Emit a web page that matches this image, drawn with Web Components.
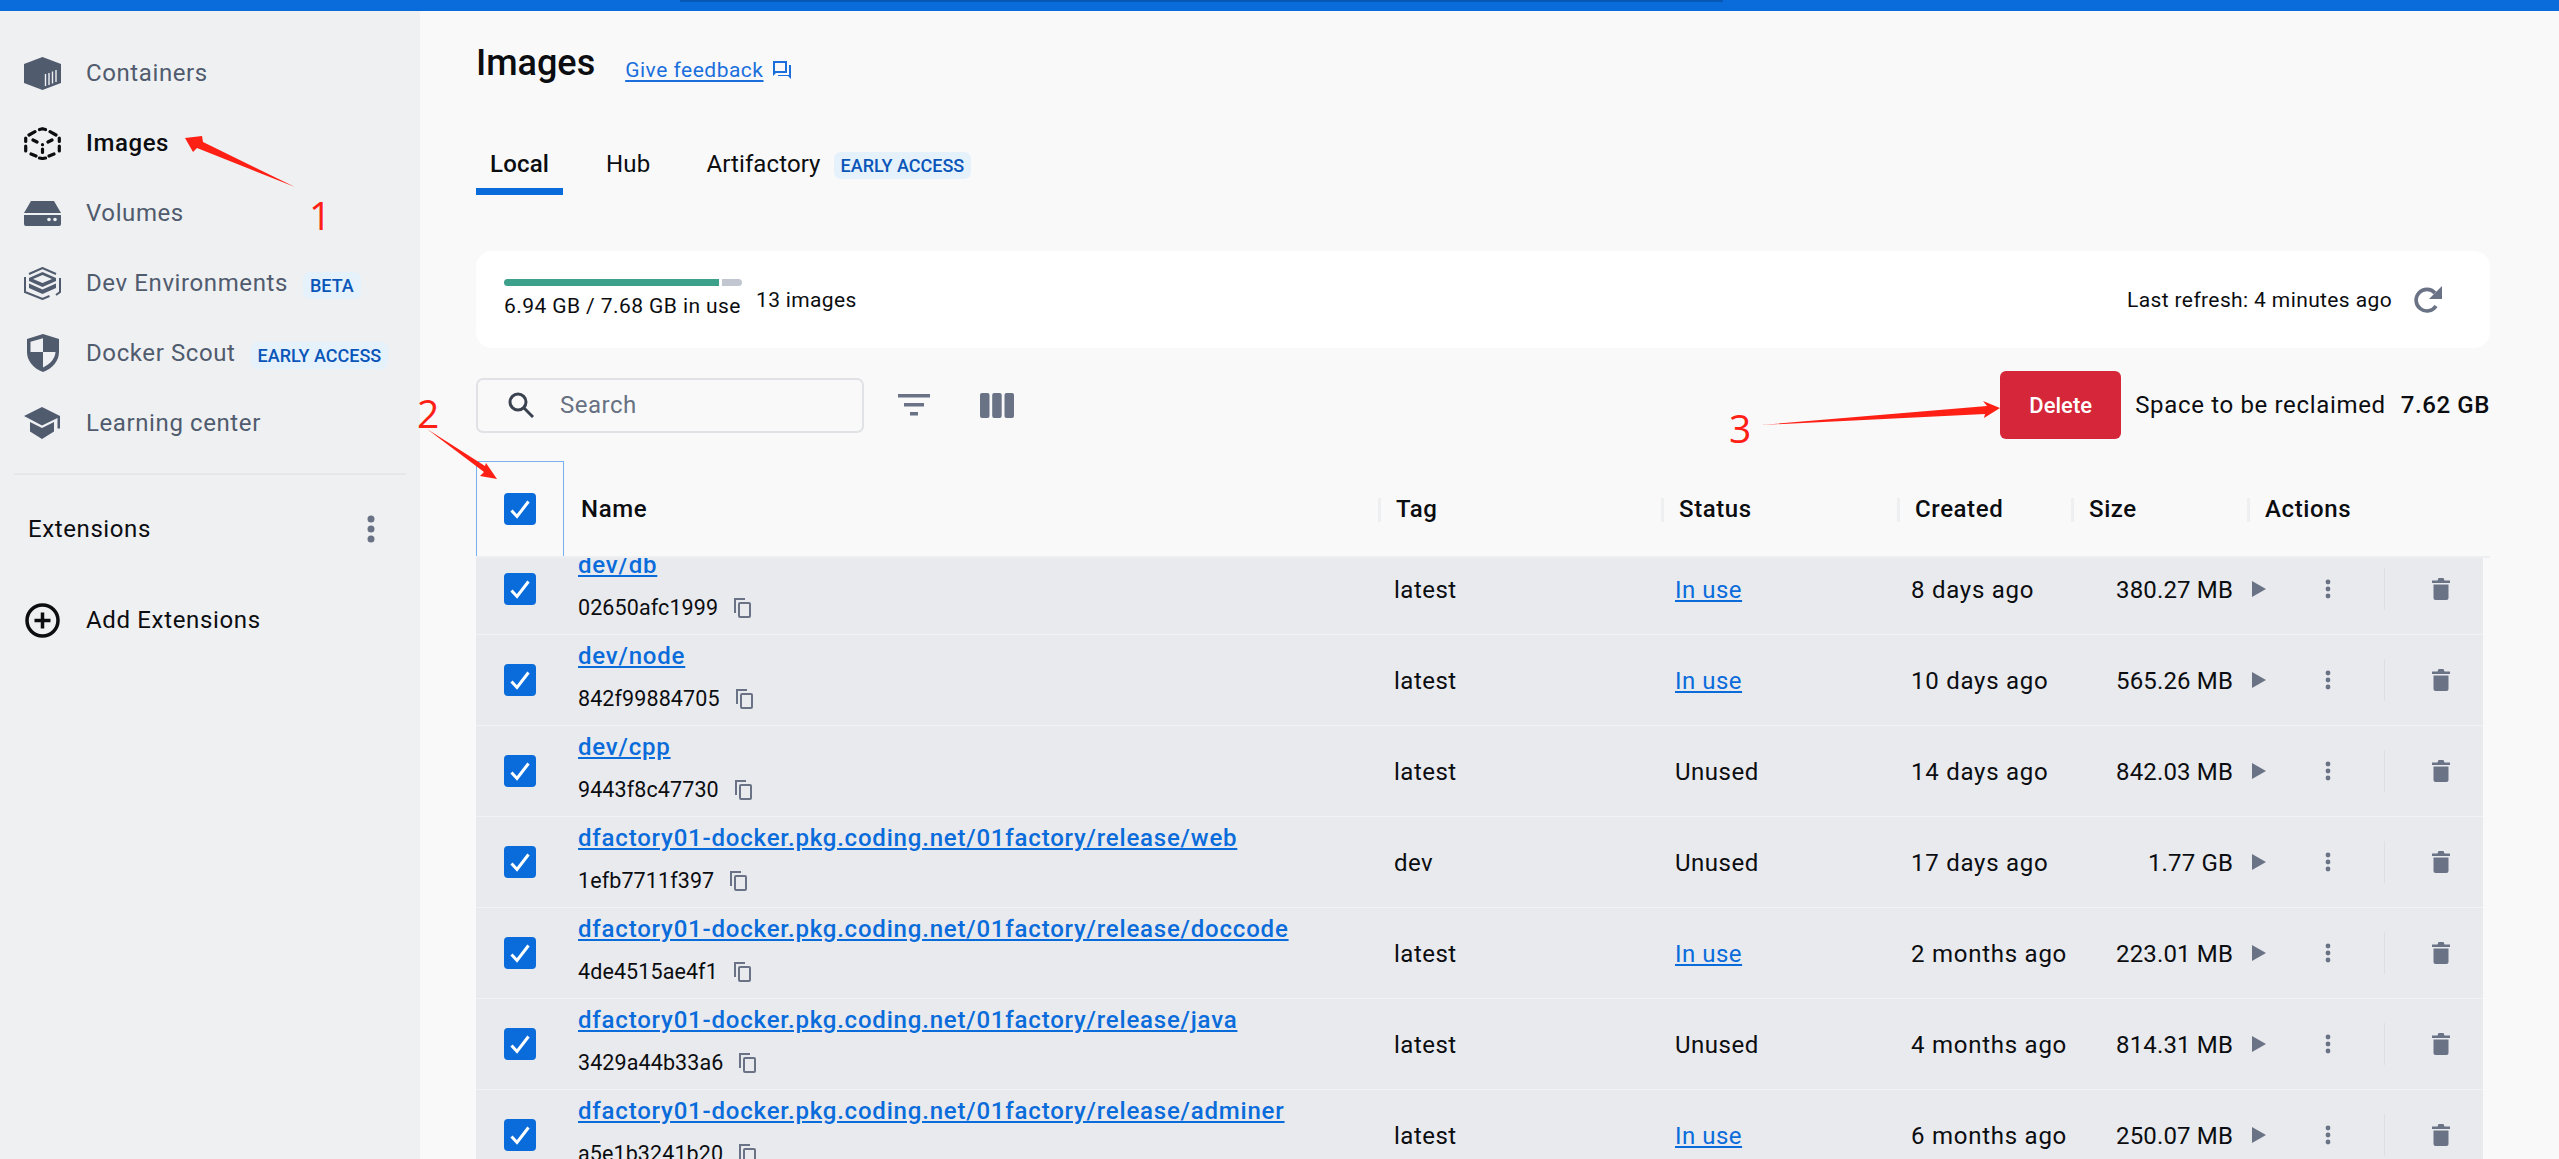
<!DOCTYPE html>
<html lang="en"><head><meta charset="utf-8"><title>Images</title>
<style>
html,body{margin:0;padding:0;height:100%;overflow:hidden;background:#f9f9fa;font-family:Roboto,"Liberation Sans",sans-serif;color:#0b0d10}
</style></head><body>
<app-shell>
  <side-nav slot="nav">
    <nav-item label="Containers" icon="containers"></nav-item>
    <nav-item label="Images" icon="images" active></nav-item>
    <nav-item label="Volumes" icon="volumes"></nav-item>
    <nav-item label="Dev Environments" icon="dev" badge="BETA"></nav-item>
    <nav-item label="Docker Scout" icon="scout" badge="EARLY ACCESS"></nav-item>
    <nav-item label="Learning center" icon="learn"></nav-item>
  </side-nav>
  <images-page>
    <page-title></page-title>
    <tab-bar></tab-bar>
    <usage-card></usage-card>
    <table-toolbar></table-toolbar>
    <image-table>
      <image-row name="dev/db" hash="02650afc1999" tag="latest" status="In use" created="8 days ago" size="380.27 MB"></image-row>
      <image-row name="dev/node" hash="842f99884705" tag="latest" status="In use" created="10 days ago" size="565.26 MB"></image-row>
      <image-row name="dev/cpp" hash="9443f8c47730" tag="latest" status="Unused" created="14 days ago" size="842.03 MB"></image-row>
      <image-row name="dfactory01-docker.pkg.coding.net/01factory/release/web" hash="1efb7711f397" tag="dev" status="Unused" created="17 days ago" size="1.77 GB"></image-row>
      <image-row name="dfactory01-docker.pkg.coding.net/01factory/release/doccode" hash="4de4515ae4f1" tag="latest" status="In use" created="2 months ago" size="223.01 MB"></image-row>
      <image-row name="dfactory01-docker.pkg.coding.net/01factory/release/java" hash="3429a44b33a6" tag="latest" status="Unused" created="4 months ago" size="814.31 MB"></image-row>
      <image-row name="dfactory01-docker.pkg.coding.net/01factory/release/adminer" hash="a5e1b3241b20" tag="latest" status="In use" created="6 months ago" size="250.07 MB"></image-row>
    </image-table>
  </images-page>
  <note-layer></note-layer>
</app-shell>
<script>
const GRAY='#505b6e', ICON='#6a7385';
const ICONS={
containers:`<svg width="37" height="33" viewBox="0 0 37 33"><path fill="${GRAY}" d="M18.500 0 37 7v19l-18.500 7L0 26V7z"/><path fill="none" stroke="#eff0f3" stroke-width="1.400" d="M21.500 17v12M25 16v12M28.500 14.500v12M32 13v12"/></svg>`,
images:`<svg width="37" height="33" viewBox="0 0 37 33"><g fill="none" stroke="#0b0d10" stroke-width="3.200" stroke-linecap="round" stroke-linejoin="round"><path d="M15.500 2.500 18.500 1.700l3 .8M5 8l6-3.300M26 4.700 32 8M1.700 11v3.500M1.700 19v5M35.300 11v3.500M35.300 19v5M7 27l5 2M25 29l5-2M15.500 31l3 .5 3-.5M9 13l4 2M24 15l4-2M18.500 17.500v.2M18.500 22v3.500"/></g></svg>`,
volumes:`<svg width="37" height="25" viewBox="0 0 37 25"><path fill="${GRAY}" d="M7 0h23l7 12H0z"/><path fill="${GRAY}" d="M0 14h37v9a2 2 0 0 1-2 2H2a2 2 0 0 1-2-2z"/><circle cx="25" cy="18.500" r="1.800" fill="#eff0f3"/><circle cx="31" cy="18.500" r="1.800" fill="#eff0f3"/></svg>`,
dev:`<svg width="37" height="33" viewBox="0 0 37 33"><g fill="none" stroke="${GRAY}" stroke-width="2"><path d="M5 7 18.500 1 32 7M36 11v14l-4 3M1 10v15l17.500 7 7-3"/></g><path fill="${GRAY}" d="M18.500 5 32 11v3l-13.500 6L5 14v-3zM18.500 8 9 12l9.500 4L28 12zM5 16.500l13.500 6 13.500-6V21L18.500 27 5 21z"/></svg>`,
scout:`<svg width="32" height="38" viewBox="0 0 32 38"><path fill="${GRAY}" d="M16 0 32 5v13c0 9-6.500 16.500-16 20C6.500 34.500 0 27 0 18V5z"/><path fill="#eff0f3" d="M16 4.300V18H3.500V7.800zM16 18h12.500c-.5 6.500-5 12-12.500 15.500z"/></svg>`,
learn:`<svg width="37" height="32" viewBox="0 0 37 32"><path fill="${GRAY}" d="M18 0 36 9v12.500h-2.500V11L18 18.500 0 9zM6 15l12 6 12-6v9.500L18 32 6 24.500z"/></svg>`
};
const check=()=>`<svg width="32" height="32" viewBox="0 0 32 32" style="display:block"><rect width="32" height="32" rx="4" fill="#0a6cdb"/><path d="M7.500 17.500 13 23.500 24.500 8.500" fill="none" stroke="#fff" stroke-width="3"/></svg>`;
function def(name,html){customElements.define(name,class extends HTMLElement{constructor(){super();this.attachShadow({mode:'open'});}connectedCallback(){this.shadowRoot.innerHTML=typeof html==='function'?html(this):html;}});}

def('app-shell',`<style>:host{display:flex;flex-direction:column;height:1159px;width:2559px;position:relative;overflow:hidden}
.top{height:11px;background:#0a6cdb;flex:none;display:flex;justify-content:center}
.top i{display:block;width:1043px;height:2px;background:#0757b5;margin-left:-156px}
.row{flex:1;display:flex;min-height:0}</style>
<div class="top"><i></i></div><div class="row"><slot name="nav"></slot><slot></slot></div>`);

def('side-nav',`<style>:host{display:block;width:420px;flex:none;background:#eff0f2;box-sizing:border-box;padding-top:27px}
.list{display:flex;flex-direction:column}
hr{border:0;height:2px;background:#e6e7ea;margin:15px 14px 0}
.ext{display:flex;align-items:center;justify-content:space-between;height:56px;margin-top:26px;padding:0 42px 0 28px;font-size:24px;letter-spacing:.6px}
svg{display:block}
.add{display:flex;align-items:center;height:36px;margin-top:45px;padding-left:25px;gap:26px;font-size:24px;letter-spacing:.65px}</style>
<div class="list"><slot></slot></div><hr>
<div class="ext"><span>Extensions</span><svg width="14" height="30" viewBox="0 0 14 30"><g fill="#6a7385"><circle cx="7" cy="5" r="3.500"/><circle cx="7" cy="15" r="3.500"/><circle cx="7" cy="25" r="3.500"/></g></svg></div>
<div class="add"><svg width="35" height="35" viewBox="0 0 35 35"><circle cx="17.500" cy="17.500" r="15.500" fill="none" stroke="#0b0d10" stroke-width="3.500"/><path d="M17.500 9.500v16M9.500 17.500h16" stroke="#0b0d10" stroke-width="3.500"/></svg><span>Add Extensions</span></div>`);

def('nav-item',el=>{const a=el.hasAttribute('active'),b=el.getAttribute('badge');
return `<style>:host{display:block}
.r{display:flex;align-items:center;height:70px;padding-left:24px;font-size:24px;letter-spacing:.6px;color:${a?'#0b0d10':'#505b6e'};font-weight:${a?500:400}}
.ic{width:37px;display:flex;justify-content:center;flex:none;margin-right:25px}
svg{display:block}
</style><div class="r"><span class="ic">${ICONS[el.getAttribute('icon')]}</span><span>${el.getAttribute('label')}</span>${b?`<ui-badge>${b}</ui-badge>`:''}</div>`;});

def('ui-badge',`<style>:host{display:inline-block;margin-left:15px;margin-top:4px;background:#e5f2fc;color:#0a55b8;font-size:18px;font-weight:500;letter-spacing:0;border-radius:7px;padding:0 7px;height:27px;line-height:27px}</style><slot></slot>`);

def('images-page',`<style>:host{display:flex;flex-direction:column;flex:1;min-width:0;box-sizing:border-box;padding:0 69px 0 56px;background:#f9f9fa}</style><slot></slot>`);

def('page-title',`<style>:host{display:flex;align-items:center;height:44px;margin-top:30px;flex:none}
h1{margin:0;font-size:36px;font-weight:500;line-height:44px;color:#0b0d10}
a{margin-left:30px;margin-top:14px;color:#1a6fdc;font-size:21px;letter-spacing:.5px;text-decoration:underline;text-underline-offset:3px}
svg{display:block;margin-left:9px;margin-top:14px}</style>
<h1>Images</h1><a>Give feedback</a><svg width="18" height="18" viewBox="0 0 18 18"><path fill="#1a6fdc" d="M0 0h14v12H3l-3 3zM2 2v8h10V2zM16 4h2v14l-3-3H5v-1h11z"/></svg>`);

def('tab-bar',`<style>:host{display:flex;align-items:flex-start;height:60px;margin-top:50px;flex:none;font-size:24px;letter-spacing:.2px}
.t{height:60px;box-sizing:border-box;padding:14px 14px 0;line-height:30px}
.t.on{border-bottom:7px solid #0a6cdb;font-weight:500;width:87px}
.h{margin-left:28px;padding:14px 15px 0;line-height:30px}
.a{margin-left:41px;padding:14px 0 0;line-height:30px;letter-spacing:.1px}
ui-badge{margin:17px 0 0 13px}</style>
<div class="t on">Local</div><div class="h">Hub</div><div class="a">Artifactory</div><ui-badge>EARLY ACCESS</ui-badge>`);

def('usage-card',`<style>:host{display:flex;align-items:flex-start;justify-content:space-between;height:97px;margin-top:56px;flex:none;background:#fff;border-radius:16px;box-sizing:border-box;padding:28px 48px 0 28px}
.l{display:flex;gap:14px}
.bar{display:flex;gap:3px;height:7px;width:238px}
.bar i{display:block;height:7px}
.g{width:215px;background:#3da08a;border-radius:4px 0 0 4px}
.x{width:20px;background:#c1c6d1;border-radius:0 4px 4px 0}
.u{font-size:21px;letter-spacing:.42px;line-height:28px;margin-top:6px;white-space:nowrap}
.n{font-size:21px;letter-spacing:.35px;line-height:28px;margin-top:7px}
.r{display:flex;align-items:center;gap:22px;margin-top:7px;font-size:21px;letter-spacing:.38px}
svg{display:block}</style>
<div class="l"><div><div class="bar"><i class="g"></i><i class="x"></i></div><div class="u">6.94 GB / 7.68 GB in use</div></div><div class="n">13 images</div></div>
<div class="r"><span>Last refresh: 4 minutes ago</span><svg width="28" height="28" viewBox="0 0 28 28"><path fill="none" stroke="${ICON}" stroke-width="3.600" d="M22 20a10.800 10.800 0 1 1-1-13"/><path fill="${ICON}" d="M28 0v13H15z"/></svg></div>`);

def('table-toolbar',`<style>:host{display:flex;align-items:center;height:68px;margin-top:23px;flex:none}
.s{display:flex;align-items:center;width:388px;height:55px;box-sizing:border-box;border:2px solid #e1e2e6;border-radius:7px;padding-left:30px;color:#677182;font-size:24px;letter-spacing:.5px;gap:26px}
svg{display:block}
.f{margin-left:34px}.c{margin-left:50px}
.sp{flex:1}
.d{width:121px;height:68px;background:#d62639;color:#fff;border-radius:6px;font-size:22px;font-weight:500;display:flex;align-items:center;justify-content:center}
.t{margin-left:14px;font-size:24px;letter-spacing:.66px}
.v{margin-left:15px;font-size:24px;font-weight:500;letter-spacing:.6px}</style>
<div class="s"><svg width="26" height="26" viewBox="0 0 26 26"><circle cx="10" cy="10" r="8" fill="none" stroke="#3a4250" stroke-width="3"/><path d="M16 16l9 9" stroke="#3a4250" stroke-width="3"/></svg><span>Search</span></div>
<svg class="f" width="32" height="22" viewBox="0 0 32 22"><path fill="${ICON}" d="M0 0h32v3.500H0zM6 9h20v3.500H6zM12 18h8v3.500h-8z"/></svg>
<svg class="c" width="34" height="25" viewBox="0 0 34 25"><g fill="${ICON}"><rect width="9.500" height="25" rx="2"/><rect x="12.200" width="9.500" height="25" rx="2"/><rect x="24.500" width="9.500" height="25" rx="2"/></g></svg>
<span class="sp"></span><div class="d">Delete</div><div class="t">Space to be reclaimed</div><div class="v">7.62 GB</div>`);

const COLS='88px 814px 283px 236px 174px 176px 236px';
def('image-table',`<style>:host{display:flex;flex-direction:column;flex:1;min-height:0;margin-top:22px}
.h{display:grid;grid-template-columns:${COLS};height:97px;flex:none;border-bottom:2px solid #eeeff1;box-sizing:border-box;font-size:24px;font-weight:500;letter-spacing:.6px;width:100%}
.h>div{display:flex;align-items:center}
.c{border:1px solid #7ab0ec;border-bottom:0;justify-content:center;box-sizing:border-box}
.n{padding-left:17px}
.o{position:relative;padding-left:18px}
.o::before{content:"";position:absolute;left:0;top:37px;height:24px;width:3px;background:#eeeff1}
.body{flex:1;min-height:0;overflow:hidden;width:2007px}
.in{margin-top:-14px}
svg{display:block}</style>
<div class="h"><div class="c">${check()}</div><div class="n">Name</div><div class="o">Tag</div><div class="o">Status</div><div class="o">Created</div><div class="o">Size</div><div class="o">Actions</div></div>
<div class="body"><div class="in"><slot></slot></div></div>`);

def('image-row',el=>{const g=k=>el.getAttribute(k),st=g('status');return `<style>:host{display:grid;grid-template-columns:${COLS};height:91px;box-sizing:border-box;background:#e9eaee;border-bottom:1px solid #f1f2f4;font-size:24px;letter-spacing:.5px;color:#0b0d10}
.c{display:flex;align-items:center;justify-content:center}
.nm{padding:7px 0 0 14px}
a{color:#0a6cdb}
.name{display:block;font-weight:500;line-height:28px;white-space:nowrap;letter-spacing:.8px}
.hash{display:flex;align-items:center;margin-top:15px;line-height:28px;font-size:21.500px;letter-spacing:.1px;gap:16px}
.t,.s,.cr,.sz{padding-top:1px}
.t{display:flex;align-items:center;padding-left:16px}
.s{display:flex;align-items:center;padding-left:14px}
.cr{display:flex;align-items:center;padding-left:14px;letter-spacing:.75px}
.sz{display:flex;align-items:center;justify-content:flex-end;padding-right:14px;letter-spacing:.15px}
.ac{display:flex;align-items:center}
svg{display:block}
.play{margin-left:5px}.kb{margin-left:59px}
.dv{width:1px;height:42px;background:#dddfe3;margin-left:53px}
.tr{margin-left:47px}</style>
<div class="c">${check()}</div>
<div class="nm"><a class="name" href="#">${g('name')}</a><div class="hash"><span>${g('hash')}</span><svg width="17" height="20" viewBox="0 0 17 20"><g fill="none" stroke="#6a7385" stroke-width="2"><path d="M1 15V1h10"/><rect x="5" y="5" width="11" height="14" rx="1"/></g></svg></div></div>
<div class="t">${g('tag')}</div>
<div class="s">${st==='In use'?`<a href="#">${st}</a>`:st}</div>
<div class="cr">${g('created')}</div>
<div class="sz">${g('size')}</div>
<div class="ac"><svg class="play" width="14" height="16" viewBox="0 0 14 16"><path fill="${ICON}" d="M0 0l14 8-14 8z"/></svg>
<svg class="kb" width="6" height="20" viewBox="0 0 6 20"><g fill="${ICON}"><circle cx="3" cy="3" r="2.400"/><circle cx="3" cy="10" r="2.400"/><circle cx="3" cy="17" r="2.400"/></g></svg>
<span class="dv"></span>
<svg class="tr" width="18" height="22" viewBox="0 0 18 22"><path fill="${ICON}" d="M0 2.500h5.500L6.500 0h5l1 2.500H18V5H0zM1.500 6.500h15V20a2 2 0 0 1-2 2h-11a2 2 0 0 1-2-2z"/></svg></div>`;});

def('note-layer',`<style>:host{position:absolute;inset:0;pointer-events:none;display:block}svg{position:absolute;left:0;top:0}text{font-family:"Open Sans",sans-serif;font-weight:400;fill:#fe2015;font-size:39px}</style>
<svg width="2559" height="1159" viewBox="0 0 2559 1159"><g fill="#fe2015">
<polygon points="185,138 202,136 203,142 295,187 197,148 193,152"/>
<polygon points="427,429 485,466 486,463 497,479 480,476 484,472"/>
<polygon points="1761,425 1987,406 1983,401 2000,408 1984,418 1985,414"/></g>
<text x="309" y="230">1</text><text x="417" y="428">2</text><text x="1729" y="443">3</text></svg>`);
</script>
</body></html>
